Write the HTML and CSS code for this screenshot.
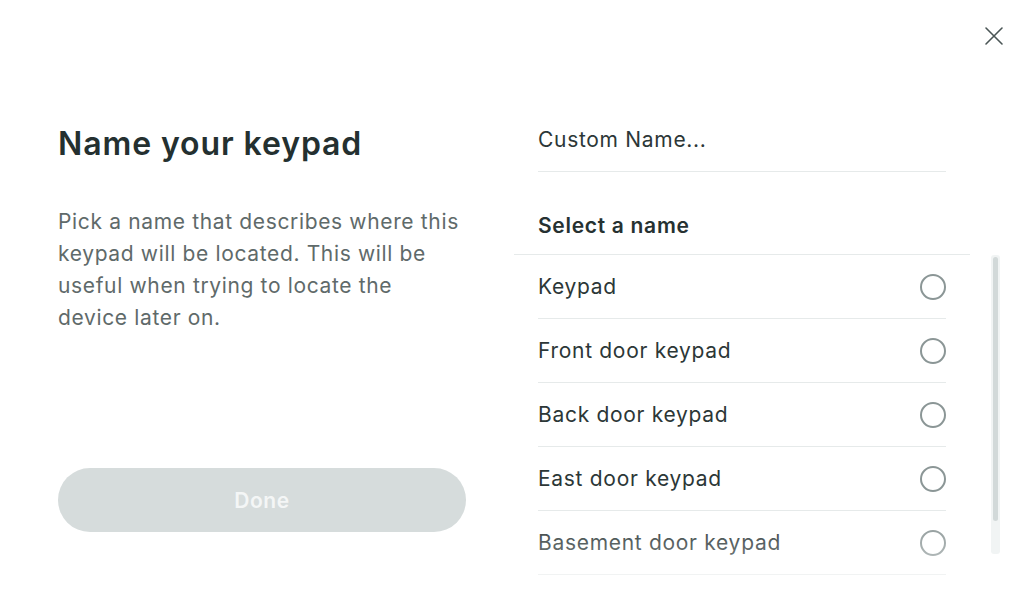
FILE: index.html
```html
<!DOCTYPE html>
<html lang="en">
<head>
<meta charset="utf-8">
<title>Name your keypad</title>
<link rel="stylesheet" href="styles.css">
</head>
<body>
<div class="dialog">
  <div class="topbar">
    <button class="close" aria-label="Close">
      <svg width="20" height="20" viewBox="0 0 20 20"><path d="M2 2 L18 18 M18 2 L2 18" stroke="#4a5555" stroke-width="1.6" fill="none" stroke-linecap="round"/></svg>
    </button>
  </div>
  <div class="content">
    <section class="left">
      <h1 class="title">Name your keypad</h1>
      <p class="desc">Pick a name that describes where this keypad will be located. This will be useful when trying to locate the device later on.</p>
      <button class="done">Done</button>
    </section>
    <section class="right">
      <div class="header">
        <div class="custom">Custom Name...</div>
        <h2 class="select">Select a name</h2>
      </div>
      <div class="listwrap">
        <div class="list">
          <div class="row"><span>Keypad</span><span class="radio"></span></div>
          <div class="row"><span>Front door keypad</span><span class="radio"></span></div>
          <div class="row"><span>Back door keypad</span><span class="radio"></span></div>
          <div class="row"><span>East door keypad</span><span class="radio"></span></div>
          <div class="row"><span>Basement door keypad</span><span class="radio"></span></div>
          <div class="fade"></div>
        </div>
        <div class="scrollbar"><div class="thumb"></div></div>
      </div>
    </section>
  </div>
</div>
</body>
</html>
```
FILE: styles.css
```css
* { box-sizing: border-box; }
html, body { margin: 0; padding: 0; background: #ffffff; }
body {
  font-family: "Inter", "Noto Sans", sans-serif;
  color: #263131;
  width: 1035px;
  height: 611px;
  overflow: hidden;
}
.dialog { display: flex; flex-direction: column; }
.topbar {
  display: flex;
  justify-content: flex-end;
  padding: 26px 31px 0 0;
  height: 48px;
}
.close {
  width: 20px;
  height: 20px;
  padding: 0;
  border: 0;
  background: none;
  display: block;
}
.close svg { display: block; }
.content {
  display: flex;
  gap: 48px;
  padding-left: 58px;
}
.left {
  width: 408px;
  display: flex;
  flex-direction: column;
  padding-top: 72px;
}
.title {
  margin: 0;
  font-size: 32px;
  line-height: 48px;
  font-weight: 600;
  color: #243030;
  letter-spacing: 0.9px;
}
.desc {
  margin: 38px 0 0;
  font-size: 21px;
  line-height: 32px;
  color: #5f6a6a;
  font-weight: 400;
  letter-spacing: 0.65px;
}
.done {
  margin-top: 134px;
  height: 64px;
  width: 408px;
  border: 0;
  border-radius: 32px;
  background: #d6dcdc;
  color: #f4f6f6;
  font-family: inherit;
  font-size: 21px;
  font-weight: 600;
  letter-spacing: 0.6px;
}
.right {
  display: flex;
  flex-direction: column;
  padding-top: 68px;
}
.header {
  width: 456px;
  border-bottom: 1px solid #e6eaea;
  padding: 0 24px;
}
.custom {
  font-size: 21px;
  line-height: 48px;
  padding-bottom: 7px;
  border-bottom: 1px solid #e6eaea;
  color: #2c3737;
  letter-spacing: 0.7px;
}
.select {
  margin: 38px 0 0;
  font-size: 21px;
  line-height: 32px;
  padding-bottom: 12px;
  font-weight: 600;
  color: #263131;
  letter-spacing: 0.7px;
}
.listwrap {
  display: flex;
  gap: 21px;
  align-items: flex-start;
}
.list {
  position: relative;
  width: 456px;
  padding: 0 24px;
  height: 320px;
  overflow: hidden;
}
.row {
  height: 64px;
  display: flex;
  align-items: center;
  justify-content: space-between;
  border-bottom: 1px solid #e6eaea;
  font-size: 21px;
  color: #2c3737;
  letter-spacing: 0.7px;
}
.radio {
  width: 26px;
  height: 26px;
  border: 2px solid #8b9696;
  border-radius: 50%;
  flex: none;
}
.fade {
  position: absolute;
  left: 0;
  right: 0;
  bottom: 0;
  height: 60px;
  background: linear-gradient(to bottom, rgba(255,255,255,0), rgba(255,255,255,0.45));
  pointer-events: none;
}
.scrollbar {
  width: 9px;
  height: 299px;
  background: #f1f4f4;
  border-radius: 3px;
  padding: 2px;
}
.thumb {
  width: 5px;
  height: 264px;
  background: #d2d9d9;
  border-radius: 3px;
}
```
